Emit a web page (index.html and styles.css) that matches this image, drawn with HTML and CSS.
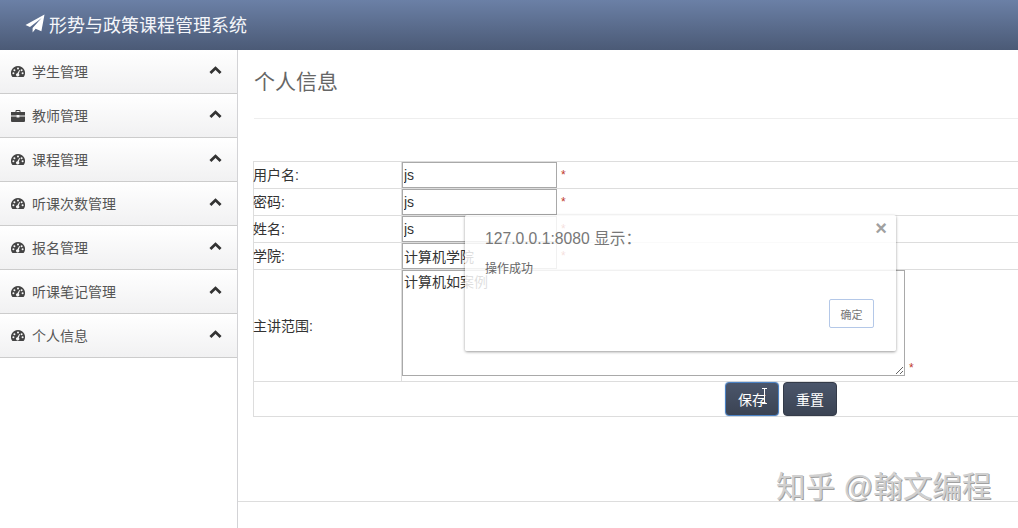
FILE: index.html
```html
<!DOCTYPE html>
<html lang="zh">
<head>
<meta charset="utf-8">
<title>形势与政策课程管理系统</title>
<link rel="stylesheet" href="styles.css">
</head>
<body>
<header class="topbar">
  <svg class="plane" viewBox="0 0 20 20" width="20" height="20"><path d="M19.5.5 16.4 17.2 10.6 14.7 7.6 18.6V14L16.6 4 5 13 .5 11.1Z" fill="#fff"/></svg>
  <span class="brand">形势与政策课程管理系统</span>
</header>
<div class="layout">
  <nav class="sidebar">
    <a class="nav-item"><svg class="ico" viewBox="0 0 14 12"><path fill-rule="evenodd" d="M7 0a7 7 0 0 1 6 10.6L12.5 11h-11l-.5-.4A7 7 0 0 1 7 0ZM7 1.6a1 1 0 1 0 0 2 1 1 0 0 0 0-2ZM3.4 3.2a1 1 0 1 0 0 2 1 1 0 0 0 0-2ZM10.6 3.2a1 1 0 1 0 0 2 1 1 0 0 0 0-2ZM2.4 6.3a1 1 0 1 0 0 2 1 1 0 0 0 0-2ZM11.6 6.3a1 1 0 1 0 0 2 1 1 0 0 0 0-2ZM8.3 4 6.4 7.2a1.6 1.6 0 1 0 1.4.5L9 4.3Z"/></svg><span class="nav-label">学生管理</span><svg class="chev" viewBox="0 0 12 8"><path d="M1.3 6.4 6 1.800l4.700 4.600" fill="none" stroke="#333" stroke-width="2.600"/></svg></a>
    <a class="nav-item"><svg class="ico" viewBox="0 0 14 12"><path d="M4.5 2V1q0-1 1-1h3q1 0 1 1v1H14v3.6H8.4V5H5.6v.6H0V2ZM5.5 1v1h3V1ZM0 6.6h5.6v1h2.8v-1H14V11q0 1-1 1H1q-1 0-1-1Z"/></svg><span class="nav-label">教师管理</span><svg class="chev" viewBox="0 0 12 8"><path d="M1.3 6.4 6 1.800l4.700 4.600" fill="none" stroke="#333" stroke-width="2.600"/></svg></a>
    <a class="nav-item"><svg class="ico" viewBox="0 0 14 12"><path fill-rule="evenodd" d="M7 0a7 7 0 0 1 6 10.6L12.5 11h-11l-.5-.4A7 7 0 0 1 7 0ZM7 1.6a1 1 0 1 0 0 2 1 1 0 0 0 0-2ZM3.4 3.2a1 1 0 1 0 0 2 1 1 0 0 0 0-2ZM10.6 3.2a1 1 0 1 0 0 2 1 1 0 0 0 0-2ZM2.4 6.3a1 1 0 1 0 0 2 1 1 0 0 0 0-2ZM11.6 6.3a1 1 0 1 0 0 2 1 1 0 0 0 0-2ZM8.3 4 6.4 7.2a1.6 1.6 0 1 0 1.4.5L9 4.3Z"/></svg><span class="nav-label">课程管理</span><svg class="chev" viewBox="0 0 12 8"><path d="M1.3 6.4 6 1.800l4.700 4.600" fill="none" stroke="#333" stroke-width="2.600"/></svg></a>
    <a class="nav-item"><svg class="ico" viewBox="0 0 14 12"><path fill-rule="evenodd" d="M7 0a7 7 0 0 1 6 10.6L12.5 11h-11l-.5-.4A7 7 0 0 1 7 0ZM7 1.6a1 1 0 1 0 0 2 1 1 0 0 0 0-2ZM3.4 3.2a1 1 0 1 0 0 2 1 1 0 0 0 0-2ZM10.6 3.2a1 1 0 1 0 0 2 1 1 0 0 0 0-2ZM2.4 6.3a1 1 0 1 0 0 2 1 1 0 0 0 0-2ZM11.6 6.3a1 1 0 1 0 0 2 1 1 0 0 0 0-2ZM8.3 4 6.4 7.2a1.6 1.6 0 1 0 1.4.5L9 4.3Z"/></svg><span class="nav-label">听课次数管理</span><svg class="chev" viewBox="0 0 12 8"><path d="M1.3 6.4 6 1.800l4.700 4.600" fill="none" stroke="#333" stroke-width="2.600"/></svg></a>
    <a class="nav-item"><svg class="ico" viewBox="0 0 14 12"><path fill-rule="evenodd" d="M7 0a7 7 0 0 1 6 10.6L12.5 11h-11l-.5-.4A7 7 0 0 1 7 0ZM7 1.6a1 1 0 1 0 0 2 1 1 0 0 0 0-2ZM3.4 3.2a1 1 0 1 0 0 2 1 1 0 0 0 0-2ZM10.6 3.2a1 1 0 1 0 0 2 1 1 0 0 0 0-2ZM2.4 6.3a1 1 0 1 0 0 2 1 1 0 0 0 0-2ZM11.6 6.3a1 1 0 1 0 0 2 1 1 0 0 0 0-2ZM8.3 4 6.4 7.2a1.6 1.6 0 1 0 1.4.5L9 4.3Z"/></svg><span class="nav-label">报名管理</span><svg class="chev" viewBox="0 0 12 8"><path d="M1.3 6.4 6 1.800l4.700 4.600" fill="none" stroke="#333" stroke-width="2.600"/></svg></a>
    <a class="nav-item"><svg class="ico" viewBox="0 0 14 12"><path fill-rule="evenodd" d="M7 0a7 7 0 0 1 6 10.6L12.5 11h-11l-.5-.4A7 7 0 0 1 7 0ZM7 1.6a1 1 0 1 0 0 2 1 1 0 0 0 0-2ZM3.4 3.2a1 1 0 1 0 0 2 1 1 0 0 0 0-2ZM10.6 3.2a1 1 0 1 0 0 2 1 1 0 0 0 0-2ZM2.4 6.3a1 1 0 1 0 0 2 1 1 0 0 0 0-2ZM11.6 6.3a1 1 0 1 0 0 2 1 1 0 0 0 0-2ZM8.3 4 6.4 7.2a1.6 1.6 0 1 0 1.4.5L9 4.3Z"/></svg><span class="nav-label">听课笔记管理</span><svg class="chev" viewBox="0 0 12 8"><path d="M1.3 6.4 6 1.800l4.700 4.600" fill="none" stroke="#333" stroke-width="2.600"/></svg></a>
    <a class="nav-item"><svg class="ico" viewBox="0 0 14 12"><path fill-rule="evenodd" d="M7 0a7 7 0 0 1 6 10.6L12.5 11h-11l-.5-.4A7 7 0 0 1 7 0ZM7 1.6a1 1 0 1 0 0 2 1 1 0 0 0 0-2ZM3.4 3.2a1 1 0 1 0 0 2 1 1 0 0 0 0-2ZM10.6 3.2a1 1 0 1 0 0 2 1 1 0 0 0 0-2ZM2.4 6.3a1 1 0 1 0 0 2 1 1 0 0 0 0-2ZM11.6 6.3a1 1 0 1 0 0 2 1 1 0 0 0 0-2ZM8.3 4 6.4 7.2a1.6 1.6 0 1 0 1.4.5L9 4.3Z"/></svg><span class="nav-label">个人信息</span><svg class="chev" viewBox="0 0 12 8"><path d="M1.3 6.4 6 1.800l4.700 4.600" fill="none" stroke="#333" stroke-width="2.600"/></svg></a>
  </nav>
  <main class="content">
    <h1 class="page-title">个人信息</h1>
    <table class="form-table">
      <tr class="row"><td class="label">用户名:</td><td class="field"><input class="input" value="js"><span class="req">*</span></td></tr>
      <tr class="row"><td class="label">密码:</td><td class="field"><input class="input" value="js"><span class="req">*</span></td></tr>
      <tr class="row"><td class="label">姓名:</td><td class="field"><input class="input" value="js"><span class="req">*</span></td></tr>
      <tr class="row"><td class="label">学院:</td><td class="field"><input class="input" value="计算机学院"><span class="req">*</span></td></tr>
      <tr class="row-tall"><td class="label">主讲范围:</td><td class="field"><textarea class="area">计算机如案例</textarea><span class="req">*</span></td></tr>
      <tr class="row-actions"><td class="actions" colspan="2"><button class="btn btn-focus">保存</button><button class="btn">重置</button></td></tr>
    </table>
    <div class="footer-line"></div>
  </main>
</div>
<svg class="ibeam" viewBox="0 0 7 16" width="7" height="16"><path d="M1 .5h5M3.500.5v15M1 15.500h5" fill="none" stroke="#fff" stroke-width="1"/></svg>
<div class="watermark">知乎 @翰文编程</div>
<div class="dialog">
  <div class="dialog-title">127.0.0.1:8080 显示：</div>
  <div class="dialog-close">×</div>
  <div class="dialog-msg">操作成功</div>
  <div class="dialog-foot"><button class="dialog-ok">确定</button></div>
</div>
</body>
</html>
```
FILE: styles.css
```css
* { box-sizing: border-box; }
html, body { margin: 0; height: 528px; overflow: hidden; }
body { font-family: "Liberation Sans", "Noto Sans CJK SC", sans-serif; font-size: 14px; color: #333; background: #fff; }
.topbar { height: 50px; display: flex; align-items: center; padding: 0 0 2px 25px; gap: 4px; background: linear-gradient(#6b80a6, #4b5a76); }
.plane { flex: none; }
.brand { color: #f4f6fa; font-size: 18px; }
.layout { display: flex; height: 478px; }
.sidebar { width: 238px; flex: none; border-right: 1px solid #d3d3d6; background: #fff; }
.nav-item { display: flex; align-items: center; height: 44px; padding: 0 15px 0 11px; border-bottom: 1px solid #ccc; background: linear-gradient(#fff 0, #f1f1f2 100%); color: #555; }
.ico { width: 14px; height: 12px; fill: #444; flex: none; margin-right: 7px; }
.nav-label { flex: 1; margin-bottom: 2px; }
.chev { width: 13px; height: 9px; flex: none; margin-bottom: 2px; }
.content { flex: 1; min-width: 0; overflow: hidden; position: relative; padding-left: 15px; }
.page-title { margin: 18px 0 0 1px; height: 51px; font-size: 21px; font-weight: 400; line-height: 28px; color: #666; border-bottom: 1px solid #eee; }
.form-table { margin-top: 42px; width: 1056px; border-collapse: collapse; table-layout: fixed; }
.form-table td { border: 1px solid #ddd; padding: 0; }
.row { height: 27px; }
.row-tall { height: 111px; }
.row-actions { height: 35px; }
.label { width: 148px; color: #333; line-height: 20px; text-indent: -1px; }
.field { vertical-align: top; border-right: 0; }
.input { display: inline-block; width: 155px; height: 26px; vertical-align: top; border: 1px solid #a9a9a9; padding: 0 1px; font: 14px "Liberation Sans", "Noto Sans CJK SC", sans-serif; color: #333; background: #fff; border-radius: 0; outline: 0; }
.area { display: block; float: left; width: 503px; height: 106px; border: 1px solid #a9a9a9; padding: 1px; font: 14px/20px "Liberation Sans", "Noto Sans CJK SC", sans-serif; color: #333; }
.req { color: #c0392b; margin-left: 4px; line-height: 26px; font-size: 12px; }
.row-tall .req { display: inline-block; margin-top: 85px; }
.actions { text-align: center; vertical-align: middle; line-height: 0; }
.btn { width: 54px; height: 34px; margin: 0 2px; vertical-align: top; background: linear-gradient(#4b566b, #3b4353); color: #fff; border: 1px solid #343b49; border-radius: 4px; font: 14px "Liberation Sans", "Noto Sans CJK SC", sans-serif; }
.btn-focus { border-color: #4b82c4; box-shadow: 0 0 1px #4b82c4; }
.footer-line { position: absolute; left: 0; right: 0; top: 451px; border-top: 1px solid #ddd; }
.ibeam { position: absolute; left: 761px; top: 388px; }
.watermark { position: absolute; left: 776px; top: 468px; font-size: 29.500px; line-height: 38px; color: #d0d0d0; text-shadow: 1px 1px 0 #a0a0a0; white-space: nowrap; }
.dialog { position: absolute; left: 465px; top: 215px; width: 431px; height: 136px; background: rgba(255,255,255,.84); border-radius: 2px; box-shadow: 0 1px 3px rgba(0,0,0,.4); color: #777; }
.dialog-title { position: absolute; left: 20px; top: 15px; font-size: 15.700px; line-height: 18px; }
.dialog-close { position: absolute; right: 9px; top: 3px; font-size: 20px; font-weight: 700; line-height: 20px; color: #a0a0a0; }
.dialog-msg { position: absolute; left: 20px; top: 47px; font-size: 12px; line-height: 14px; color: #666; }
.dialog-foot { position: absolute; right: 22px; top: 84px; }
.dialog-ok { display: block; width: 45px; height: 29px; padding: 0; background: #fff; border: 1px solid #b4c8e8; border-radius: 2px; font: 11px "Liberation Sans", "Noto Sans CJK SC", sans-serif; color: #777; }
```
